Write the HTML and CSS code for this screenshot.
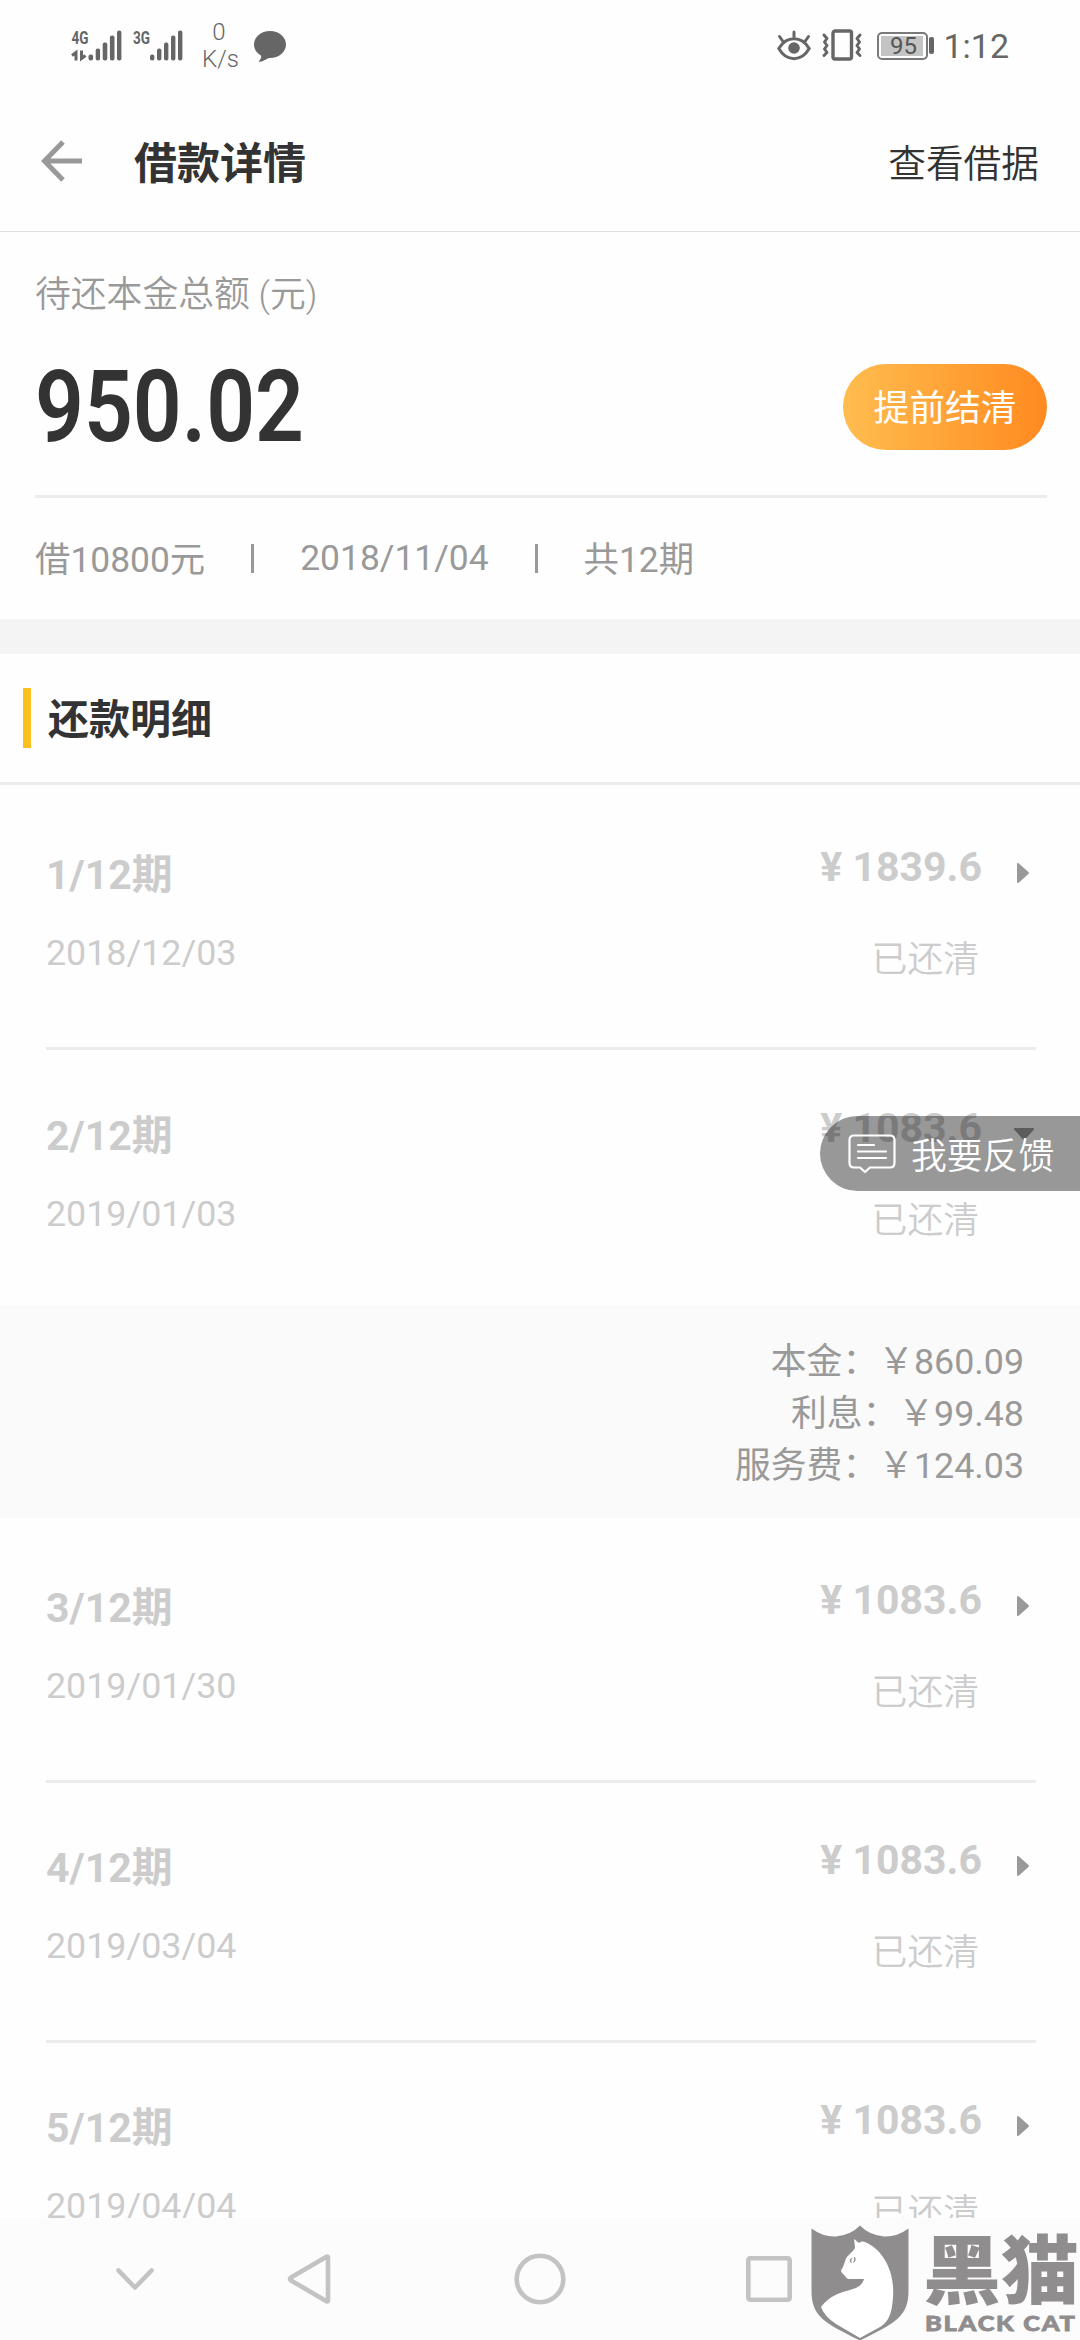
FILE: index.html
```html
<!DOCTYPE html>
<html lang="zh-CN">
<head>
<meta charset="utf-8">
<title>借款详情</title>
<link rel="stylesheet" href="styles.css">
</head>
<body>
<div class="screen">
  <div class="status">
    <svg class="status-signal" width="112" height="34" viewBox="0 0 112 34">
      <g fill="#666">
        <rect x="17.500" y="24.500" width="4.600" height="6" rx="2"/><rect x="24.700" y="18.500" width="4.400" height="12" rx="2"/><rect x="31.700" y="12.500" width="4.600" height="18" rx="2"/><rect x="38.900" y="5.500" width="4.600" height="25" rx="2"/><rect x="46" y="0.500" width="4.400" height="30" rx="2"/>
        <rect x="79" y="24.500" width="4.400" height="6" rx="2"/><rect x="86" y="18.500" width="4.400" height="12" rx="2"/><rect x="93" y="12.500" width="4.400" height="18" rx="2"/><rect x="100" y="5.500" width="4.400" height="25" rx="2"/><rect x="107" y="0.500" width="4.400" height="30" rx="2"/>
      </g>
      <path d="M1 25.500 L5 22.500 V30.500 M10.500 20.500 V28.500 L14.500 25.500" fill="none" stroke="#666" stroke-width="3"/>
      <text class="net" x="0.500" y="13.500" textLength="17" lengthAdjust="spacingAndGlyphs">4G</text>
      <text class="net" x="62" y="13.500" textLength="17" lengthAdjust="spacingAndGlyphs">3G</text>
    </svg>
    <div class="speed"><span>0</span><span>K/s</span></div>
    <svg class="bubble" width="32" height="31" viewBox="0 0 32 31"><path d="M16 0C25 0 32 6 32 13.500S25 27 16 27C13 27 12 29 9 30C7 31 4 31 5 30C7 28 7.500 26 7 24.500C3 22 0 18.500 0 13.500C0 6 7 0 16 0Z" fill="#666"/></svg>
    <div class="status-right">
      <svg width="34" height="31" viewBox="0 0 34 31" fill="none" stroke="#666" stroke-width="3" stroke-linecap="round"><path d="M1.800 18.500C9.500 5.500 24.500 5.500 32.200 18.500C24.500 32 9.500 32 1.800 18.500Z"/><circle cx="17" cy="18" r="5.800" fill="#666" stroke="none"/><path d="M17 2V7M2.500 6.500L6 11.500M31.500 6.500L28 11.500"/></svg>
      <svg class="vibrate" width="40" height="32" viewBox="0 0 40 32" fill="none" stroke="#666" stroke-width="3.400" stroke-linecap="round" stroke-linejoin="round"><rect x="11" y="2" width="18.500" height="28" rx="2"/><path stroke-width="3" d="M2 6L5 9.500L2.500 13L5 16.500L2.500 20L5 23.500L2 26.500M38 6L35 9.500L37.500 13L35 16.500L37.500 20L35 23.500L38 26.500"/></svg>
      <div class="battery"><span class="battery-fill">95</span></div><i class="battery-cap"></i>
      <span class="clock">1:12</span>
    </div>
  </div>

  <header class="header">
    <svg class="back" width="42" height="42" viewBox="0 0 42 42" fill="none" stroke="#999" stroke-width="5"><path d="M41 21H4M22 2L3.500 21L22 40"/></svg>
    <h1 class="title">借款详情</h1>
    <a class="link">查看借据</a>
  </header>

  <section class="summary">
    <div class="label">待还本金总额 (元)</div>
    <div class="amount-row">
      <div class="amount">950.02</div>
      <button class="settle">提前结清</button>
    </div>
    <div class="info"><span class="info-cjk">借10800元</span><i></i><span>2018/11/04</span><i></i><span class="info-cjk">共12期</span></div>
  </section>

  <div class="spacer"></div>
  <h2 class="section">还款明细</h2>

  <main class="list">
    <div class="row row-lead">
      <div class="left"><b>1/12期</b><span>2018/12/03</span></div>
      <div class="right"><b>¥ 1839.6</b><span>已还清</span></div>
      <svg class="caret" width="14" height="22" viewBox="0 0 14 22"><path d="M2 2V20L12 11Z"/></svg>
    </div>
    <div class="row row-open">
      <div class="left"><b>2/12期</b><span>2019/01/03</span></div>
      <div class="right"><b>¥ 1083.6</b><span>已还清</span></div>
      <svg class="caret caret-down" width="22" height="14" viewBox="0 0 22 14"><path d="M2 2H20L11 12Z"/></svg>
    </div>
    <div class="detail">
      <div>本金：￥860.09</div>
      <div>利息：￥99.48</div>
      <div>服务费：￥124.03</div>
    </div>
    <div class="row row-lead">
      <div class="left"><b>3/12期</b><span>2019/01/30</span></div>
      <div class="right"><b>¥ 1083.6</b><span>已还清</span></div>
      <svg class="caret" width="14" height="22" viewBox="0 0 14 22"><path d="M2 2V20L12 11Z"/></svg>
    </div>
    <div class="row">
      <div class="left"><b>4/12期</b><span>2019/03/04</span></div>
      <div class="right"><b>¥ 1083.6</b><span>已还清</span></div>
      <svg class="caret" width="14" height="22" viewBox="0 0 14 22"><path d="M2 2V20L12 11Z"/></svg>
    </div>
    <div class="row">
      <div class="left"><b>5/12期</b><span>2019/04/04</span></div>
      <div class="right"><b>¥ 1083.6</b><span>已还清</span></div>
      <svg class="caret" width="14" height="22" viewBox="0 0 14 22"><path d="M2 2V20L12 11Z"/></svg>
    </div>
  </main>

  <nav class="nav">
    <svg width="40" height="24" viewBox="0 0 40 24"><path d="M3.500 3.500L20 20.500L36.500 3.500"/></svg>
    <svg width="44" height="52" viewBox="0 0 44 52"><path d="M41 4.500V47.500Q41 49 39.500 48.200L4 27.500Q2 26 4 24.500L39.500 3.800Q41 3 41 4.500Z"/></svg>
    <svg width="52" height="52" viewBox="0 0 52 52"><circle cx="26" cy="26" r="23.300"/></svg>
    <svg width="48" height="48" viewBox="0 0 48 48"><rect x="3.300" y="3.300" width="41.400" height="41.400" rx="2"/></svg>
  </nav>

  <div class="feedback">
    <svg width="48" height="40" viewBox="0 0 48 40" fill="none" stroke="#fff" stroke-width="2.200" stroke-linecap="round" stroke-linejoin="round"><path d="M6 1.500H42Q46.500 1.500 46.500 6V29Q46.500 33.500 42 33.500H22L17 38L12 33.500H6Q1.500 33.500 1.500 29V6Q1.500 1.500 6 1.500Z"/><path d="M10 11H26M10 17.500H38M10 24H38"/></svg>
    <span>我要反馈</span>
  </div>

  <div class="brand">
    <svg width="98" height="116" viewBox="0 0 98 116">
      <path fill="#8f8d8e" d="M0.500 3.500Q12 12 25 11.500Q40 10 49 0.500Q58 10 73 11.500Q86 12 97.500 3.500V66C97.500 92 84 98 49 115.500C14 98 0.500 92 0.500 66Z"/>
      <path fill="#fff" d="M43 14L48 18C51 16 52 16.500 54 17C73 25 84 48 82 72C81 91 76 98 69 102L49 113L25 99Q13 91 10 82C15 76 19 72 29 68C40 64 50 64 53 54H38C35 54 35 51 32 49C29 46 30 45 32 42C35 35 34 33 38 30C40 27 44 25 44 22Z"/>
      <path fill="#8f8d8e" d="M39 37Q38 33 42 33Q39 35 41 38ZM44 32Q46 36 42 38Q44 35 43 32Z"/>
    </svg>
    <div class="brand-text">
      <div class="brand-cn">黑猫</div>
      <div class="brand-en">BLACK CAT</div>
    </div>
  </div>
</div>
</body>
</html>
```
FILE: styles.css
```css
* { box-sizing: border-box; margin: 0; padding: 0; }
body { background: #fff; font-family: Roboto, "Noto Sans CJK SC", sans-serif; }
svg { display: block; flex: none; overflow: visible; }
i { display: block; flex: none; }

.screen {
  position: relative;
  display: flex;
  flex-direction: column;
  width: 1080px;
  height: 2340px;
  overflow: hidden;
  background: #fefefe;
  font-size: 35.8px;
  line-height: 40px;
  color: #999;
}

/* status bar */
.status { display: flex; flex: none; height: 92px; padding: 0 71px; color: #666; }
.status-signal { margin-top: 30px; }
.net { font: 700 19px Roboto, sans-serif; fill: #666; }
.speed { display: flex; flex-direction: column; width: 34px; margin: 19px 0 0 19px; font-size: 24px; font-weight: 300; line-height: 27px; text-align: center; }
.bubble { margin: 31px 0 0 18px; }
.status-right { display: flex; margin: 30px 0 0 auto; }
.vibrate { margin: -1px 0 0 11px; }
.battery { width: 51px; height: 28px; margin: 2px 0 0 15px; padding: 2px; border: 2px solid #7a7a7a; border-radius: 5px; }
.battery-fill { display: block; width: 42px; height: 20px; background: #c4c4c4; font-size: 24px; line-height: 21px; text-align: center; padding-left: 2px; color: #555; }
.battery-cap { width: 5px; height: 17px; margin: 7px 0 0 1px; border-radius: 2px; background: #666; }
.clock { margin: -4px 0 0 9px; font-size: 34px; line-height: 40px; }

/* page header */
.header { display: flex; flex: none; align-items: center; height: 140px; padding: 0 41px; border-bottom: 1px solid #dedede; }
.back { margin-top: -2px; }
.title { margin: 5px 0 0 51px; font-size: 43px; font-weight: 700; color: #333; line-height: 48px; }
.link { margin: 5px 0 0 auto; font-size: 37.7px; font-weight: 350; color: #333; }

/* loan summary */
.summary { flex: none; height: 387px; padding: 43px 33px 0 35px; }
.label { font-weight: 350; }
.amount-row { display: flex; justify-content: space-between; align-items: center; height: 180px; padding: 49px 0 45px; }
.amount { font-size: 101px; font-weight: 600; line-height: 86px; color: #333; transform: scaleX(.848); transform-origin: left; }
.settle { width: 204px; height: 86px; border: 0; border-radius: 43px; background: linear-gradient(90deg, #ffbd4f, #ff8a20); color: #fff; font: inherit; padding-top: 3px; }
.info { display: flex; align-items: center; gap: 46px; height: 124px; border-top: 3px solid #ececec; font-size: 35.4px; }
.info i { width: 3px; height: 29px; background: #999; }
.info span { margin-top: -2px; }
.info .info-cjk { margin-top: 3px; }

.spacer { flex: none; height: 35px; background: #f4f4f4; }
.section { display: flex; flex: none; align-items: center; gap: 17px; height: 131px; padding: 3px 0 0 23px; border-bottom: 3px solid #ececec; font-size: 41px; color: #333; }
.section::before { content: ""; width: 8px; height: 60px; margin-top: -3px; background: #fcbf22; }

/* repayment list */
.list { display: flex; flex: 1; flex-direction: column; min-height: 0; overflow: hidden; }
.row { display: flex; flex: none; height: 260px; margin: 0 44px 0 46px; border-bottom: 3px solid #ececec; color: #ccc; }
.row-lead { height: 265px; padding-top: 5px; }
.row-open { height: 255px; padding-top: 1px; border-bottom: 0; }
.row b { font-size: 41px; line-height: 48px; }
.left, .right { display: flex; flex-direction: column; }
.left { gap: 34px; padding-top: 61px; }
.right { gap: 49px; align-items: flex-end; margin-left: auto; padding-top: 53px; }
.right span { margin-right: 3px; font-weight: 350; }
.caret { margin: 72px 6px 0 34px; fill: #999; stroke: #999; stroke-width: 2; stroke-linejoin: round; }
.caret-down { margin: 76px 1px 0 31px; }
.detail { flex: none; height: 213px; padding: 31px 56px 0 0; background: #fafafa; line-height: 52px; text-align: right; }

/* system navigation */
.nav { display: flex; flex: none; align-items: center; height: 122px; padding: 0 0 0 115px; background: #fcfcfc; }
.nav svg { fill: none; stroke: #c3c3c3; stroke-width: 4.600; stroke-linecap: round; stroke-linejoin: round; }
.nav svg + svg { margin-left: 132px; }
.nav svg:nth-child(3) { margin-left: 183px; }
.nav svg:nth-child(4) { margin-left: 179px; }

/* floating feedback button */
.feedback { position: absolute; right: 0; top: 1116px; display: flex; align-items: center; gap: 15px; width: 260px; height: 75px; padding-left: 28px; border-radius: 38px 0 0 38px; background: rgba(0, 0, 0, .4); color: #fff; font-weight: 350; }
.feedback span { padding-top: 7px; }

/* corner brand mark */
.brand { position: absolute; left: 811px; top: 2225px; display: flex; gap: 14px; color: #8f8d8e; }
.brand-text { display: flex; flex-direction: column; align-items: flex-start; }
.brand-cn { margin-top: 6px; font: 900 75px/70px "Noto Sans CJK SC", sans-serif; transform: scaleX(1.04); transform-origin: left; }
.brand-en { margin: 9px 0 0 2px; font: 900 21.5px/26px Lato, sans-serif; letter-spacing: 1.5px; white-space: nowrap; -webkit-text-stroke: .8px #8f8d8e; transform: scaleX(1.18); transform-origin: left; }
```
